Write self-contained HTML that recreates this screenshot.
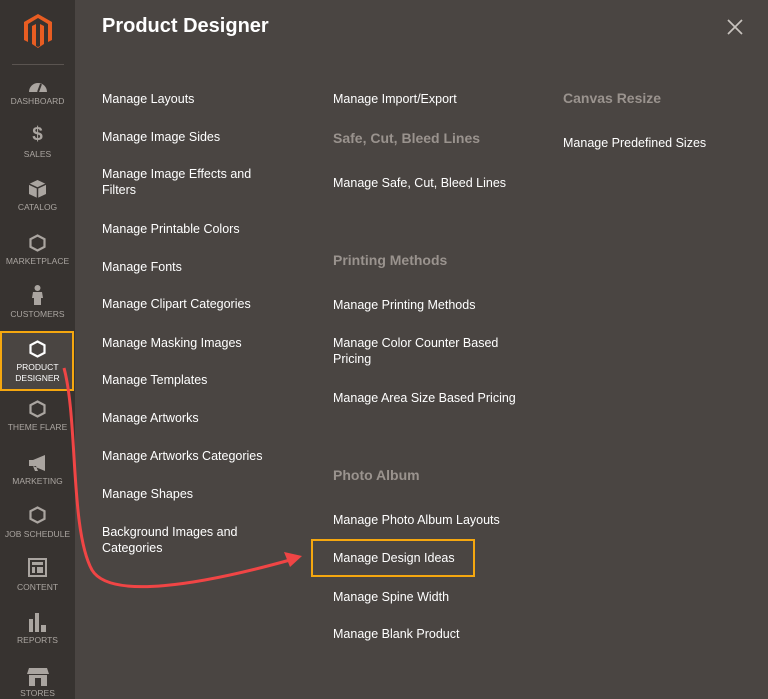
<!DOCTYPE html>
<html><head><meta charset="utf-8"><style>
body{margin:0;width:768px;height:699px;overflow:hidden;background:#4a4542;font-family:"Liberation Sans",sans-serif;position:relative}
#sb{position:absolute;left:0;top:0;width:75px;height:699px;background:#373330}
.it{position:absolute;left:0;width:75px;text-align:center;color:#aaa5a0;font-size:8.5px;line-height:11px}
.ic{position:absolute;left:0;width:75px;display:flex;justify-content:center}
.t{position:absolute;color:#fff;font-size:12.5px;line-height:16px;white-space:nowrap}
.h{position:absolute;color:#9a938e;font-size:14px;font-weight:bold;white-space:nowrap}
</style></head><body>
<div id="sb">
<svg style="position:absolute;left:24px;top:14px" width="28" height="34" viewBox="0 0 28 34"><path d="M14 0 L28 8 V26 L24 28 V10 L14 4 L4 10 V28 L0 26 V8Z M8 12 L12 10 V32 L14 33 L16 32 V10 L20 12 V30 L14 34 L8 30Z" fill="#e85d22"/></svg>
<div style="position:absolute;left:12px;top:64px;width:52px;height:1px;background:#5a5450"></div>
<svg style="position:absolute;left:28px;top:79px" width="20" height="14"><path d="M1 13 A9 9 0 0 1 19 13Z" fill="#aaa5a0"/><path d="M10 13 L13 5" stroke="#373330" stroke-width="2"/></svg>
<div class="it" style="top:96px">DASHBOARD</div>
<div class="ic" style="top:124px;color:#aaa5a0;font-weight:bold;font-size:19px">$</div>
<div class="it" style="top:149px">SALES</div>
<svg style="position:absolute;left:29px;top:180px" width="17" height="18"><path d="M8.5 0 L17 4 V14 L8.5 18 L0 14 V4Z" fill="#aaa5a0"/><path d="M0 4 L8.5 8 L17 4 M8.5 8 V18" stroke="#373330" stroke-width="1.5" fill="none"/></svg>
<div class="it" style="top:202px">CATALOG</div>
<svg style="position:absolute;left:29px;top:234px" width="17" height="18"><path d="M8.5 1.5 L15.5 5.2 V12.8 L8.5 16.5 L1.5 12.8 V5.2Z" fill="none" stroke="#aaa5a0" stroke-width="2.2"/></svg>
<div class="it" style="top:256px">MARKETPLACE</div>
<svg style="position:absolute;left:31px;top:285px" width="13" height="20"><circle cx="6.5" cy="3" r="3" fill="#aaa5a0"/><path d="M2 7 H11 L12 13 H10 V20 H3 V13 H1Z" fill="#aaa5a0"/></svg>
<div class="it" style="top:309px">CUSTOMERS</div>
<div style="position:absolute;left:0;top:331px;width:74px;height:60px;background:#4a4542;border:2px solid #f5a70f;box-sizing:border-box"></div>
<svg style="position:absolute;left:29px;top:340px" width="17" height="18"><path d="M8.5 1.5 L15.5 5.2 V12.8 L8.5 16.5 L1.5 12.8 V5.2Z" fill="none" stroke="#fff" stroke-width="2.2"/></svg>
<div class="it" style="top:362px;color:#fff">PRODUCT<br>DESIGNER</div>
<svg style="position:absolute;left:29px;top:400px" width="17" height="18"><path d="M8.5 1.5 L15.5 5.2 V12.8 L8.5 16.5 L1.5 12.8 V5.2Z" fill="none" stroke="#aaa5a0" stroke-width="2.2"/></svg>
<div class="it" style="top:422px">THEME FLARE</div>
<svg style="position:absolute;left:28px;top:455px" width="20" height="16"><path d="M1 5 H5 L17 0 V16 L5 11 H1Z M5 11 L7 16 H10 L8 11Z" fill="#aaa5a0"/></svg>
<div class="it" style="top:476px">MARKETING</div>
<svg style="position:absolute;left:29px;top:506px" width="17" height="18"><path d="M8.5 1.5 L15.5 5.2 V12.8 L8.5 16.5 L1.5 12.8 V5.2Z" fill="none" stroke="#aaa5a0" stroke-width="2.2"/></svg>
<div class="it" style="top:529px">JOB SCHEDULE</div>
<svg style="position:absolute;left:28px;top:558px" width="19" height="19"><rect x="1" y="1" width="17" height="17" fill="none" stroke="#aaa5a0" stroke-width="2"/><rect x="4" y="4" width="11" height="3" fill="#aaa5a0"/><rect x="4" y="9" width="3" height="6" fill="#aaa5a0"/><rect x="9" y="9" width="6" height="6" fill="#aaa5a0"/></svg>
<div class="it" style="top:582px">CONTENT</div>
<svg style="position:absolute;left:29px;top:613px" width="19" height="19"><rect x="0" y="6" width="4" height="13" fill="#aaa5a0"/><rect x="6" y="0" width="4" height="19" fill="#aaa5a0"/><rect x="12" y="12" width="5" height="7" fill="#aaa5a0"/></svg>
<div class="it" style="top:635px">REPORTS</div>
<svg style="position:absolute;left:27px;top:668px" width="22" height="18"><path d="M2 0 H20 L22 6 H0Z M2 7 H20 V18 H2Z" fill="#aaa5a0"/><rect x="8" y="10" width="6" height="8" fill="#373330"/></svg>
<div class="it" style="top:688px">STORES</div>
</div>
<div style="position:absolute;left:102px;top:15px;color:#fff;font-size:20px;font-weight:bold">Product Designer</div>
<svg style="position:absolute;left:727px;top:19px" width="16" height="16"><path d="M1 1 L15 15 M15 1 L1 15" stroke="#c8c3be" stroke-width="1.7"/></svg>

<div class="t" style="left:102px;top:91px">Manage Layouts</div>
<div class="t" style="left:102px;top:129px">Manage Image Sides</div>
<div class="t" style="left:102px;top:166px">Manage Image Effects and<br>Filters</div>
<div class="t" style="left:102px;top:221px">Manage Printable Colors</div>
<div class="t" style="left:102px;top:259px">Manage Fonts</div>
<div class="t" style="left:102px;top:296px">Manage Clipart Categories</div>
<div class="t" style="left:102px;top:335px">Manage Masking Images</div>
<div class="t" style="left:102px;top:372px">Manage Templates</div>
<div class="t" style="left:102px;top:410px">Manage Artworks</div>
<div class="t" style="left:102px;top:448px">Manage Artworks Categories</div>
<div class="t" style="left:102px;top:486px">Manage Shapes</div>
<div class="t" style="left:102px;top:524px">Background Images and<br>Categories</div>

<div class="t" style="left:333px;top:91px">Manage Import/Export</div>
<div class="h" style="left:333px;top:130px">Safe, Cut, Bleed Lines</div>
<div class="t" style="left:333px;top:175px">Manage Safe, Cut, Bleed Lines</div>
<div class="h" style="left:333px;top:252px">Printing Methods</div>
<div class="t" style="left:333px;top:297px">Manage Printing Methods</div>
<div class="t" style="left:333px;top:335px">Manage Color Counter Based<br>Pricing</div>
<div class="t" style="left:333px;top:390px">Manage Area Size Based Pricing</div>
<div class="h" style="left:333px;top:467px">Photo Album</div>
<div class="t" style="left:333px;top:512px">Manage Photo Album Layouts</div>
<div style="position:absolute;left:311px;top:539px;width:164px;height:38px;border:2px solid #f5a70f;box-sizing:border-box"></div>
<div class="t" style="left:333px;top:550px">Manage Design Ideas</div>
<div class="t" style="left:333px;top:589px">Manage Spine Width</div>
<div class="t" style="left:333px;top:626px">Manage Blank Product</div>

<div class="h" style="left:563px;top:90px">Canvas Resize</div>
<div class="t" style="left:563px;top:135px">Manage Predefined Sizes</div>

<svg style="position:absolute;left:0;top:0" width="768" height="699"><path d="M64 368 C78 420 70 530 92 570 C110 600 200 585 290 560" fill="none" stroke="#f04545" stroke-width="3"/><path d="M302 556 L284 552 L290 567Z" fill="#f04545"/></svg>
</body></html>
